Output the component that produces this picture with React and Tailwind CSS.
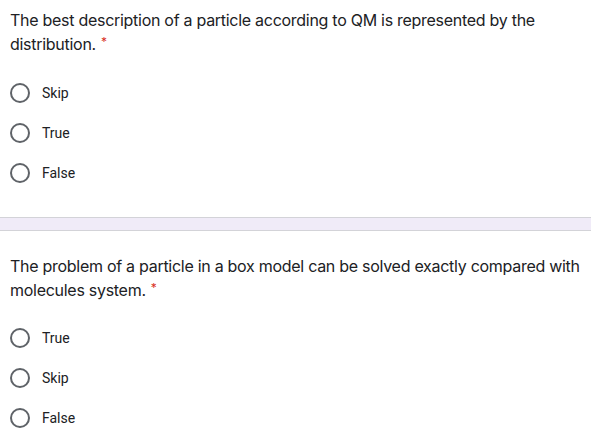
import React from 'react';

const questions = [
    {
        id: 1,
        title: 'The best description of a particle according to QM is represented by the distribution.',
        options: ['Skip', 'True', 'False'],
    },
    {
        id: 2,
        title: 'The problem of a particle in a box model can be solved exactly compared with molecules system.',
        options: ['True', 'Skip', 'False'],
    },
];

const Radio = ({ label }) => (
    <div className="flex items-center h-[40px]">
        <div className="w-[20px] h-[20px] rounded-full border-2 border-[#5f6368] ml-[10px] shrink-0" />
        <span
            className="ml-[12px] text-[14px] text-[#202124]"
            style={{ fontFamily: 'Roboto, "Liberation Sans", sans-serif' }}
        >
            {label}
        </span>
    </div>
);

const Question = ({ q, first }) => (
    <div className={first ? 'pt-[8px] pb-[24px]' : 'pt-[23px] pb-[8px]'}>
        <div
            className="pl-[10px] pr-[2px] text-[16px] leading-[24px] tracking-[-0.28px] text-[#202124]"
            style={{ fontFamily: 'Inter, "Open Sans", sans-serif' }}
        >
            {q.title}
            <span className="inline-block ml-[5px] text-[#d93025] text-[12px] leading-[12px] relative -top-[4px]">*</span>
        </div>
        <div className={first ? 'mt-[17px]' : 'mt-[16px]'}>
            {q.options.map((o) => (
                <Radio key={o} label={o} />
            ))}
        </div>
    </div>
);

const App = () => {
    return (
        <div className="w-[591px] h-[445px] bg-white overflow-hidden">
            <Question q={questions[0]} first />
            {/* divider band */}
            <div className="h-[14px] bg-[#f0ebf8] border-y border-[#d3d3d8]" />
            <Question q={questions[1]} />
        </div>
    );
};

export default App;
